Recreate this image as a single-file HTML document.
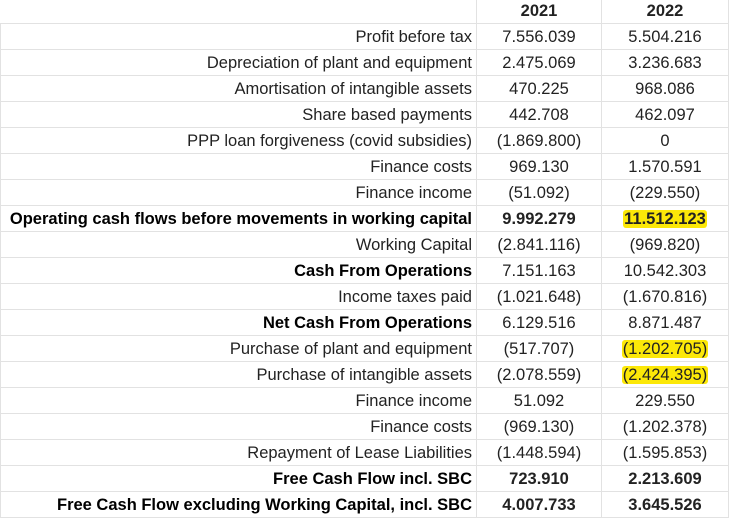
<!DOCTYPE html>
<html><head><meta charset="utf-8"><style>
body{margin:0;background:#fff;font-family:"Liberation Sans",Arial,sans-serif;font-size:16.5px;color:#222;overflow:hidden;width:729px;height:516px;position:relative;}
.r{display:flex;height:26px;line-height:27px;border-bottom:1px solid #e2e2e2;box-sizing:border-box;white-space:nowrap;}
.r.h{height:24px;line-height:22px;font-weight:bold;}
.l{width:477px;text-align:right;padding-right:4px;box-sizing:border-box;border-right:1px solid #e2e2e2;border-left:1px solid #e2e2e2;}
.a{width:125px;text-align:center;box-sizing:border-box;border-right:1px solid #e2e2e2;}
.b{width:127px;text-align:center;box-sizing:border-box;border-right:1px solid #e2e2e2;}
.bo{font-weight:bold;color:#000;}
.bo .a,.bo .b{color:#222;}
.n .a,.n .b{font-weight:normal;}
.hl{background:#fce808;padding:0 1px;border-radius:3px;}
</style></head><body>
<div class="r h"><div class="l" style="border-left:none"></div><div class="a">2021</div><div class="b">2022</div></div>
<div class="r"><div class="l">Profit before tax</div><div class="a">7.556.039</div><div class="b">5.504.216</div></div>
<div class="r"><div class="l">Depreciation of plant and equipment</div><div class="a">2.475.069</div><div class="b">3.236.683</div></div>
<div class="r"><div class="l">Amortisation of intangible assets</div><div class="a">470.225</div><div class="b">968.086</div></div>
<div class="r"><div class="l">Share based payments</div><div class="a">442.708</div><div class="b">462.097</div></div>
<div class="r"><div class="l">PPP loan forgiveness (covid subsidies)</div><div class="a">(1.869.800)</div><div class="b">0</div></div>
<div class="r"><div class="l">Finance costs</div><div class="a">969.130</div><div class="b">1.570.591</div></div>
<div class="r"><div class="l">Finance income</div><div class="a">(51.092)</div><div class="b">(229.550)</div></div>
<div class="r bo"><div class="l">Operating cash flows before movements in working capital</div><div class="a">9.992.279</div><div class="b"><span class="hl">11.512.123</span></div></div>
<div class="r"><div class="l">Working Capital</div><div class="a">(2.841.116)</div><div class="b">(969.820)</div></div>
<div class="r bo n"><div class="l">Cash From Operations</div><div class="a">7.151.163</div><div class="b">10.542.303</div></div>
<div class="r"><div class="l">Income taxes paid</div><div class="a">(1.021.648)</div><div class="b">(1.670.816)</div></div>
<div class="r bo n"><div class="l">Net Cash From Operations</div><div class="a">6.129.516</div><div class="b">8.871.487</div></div>
<div class="r"><div class="l">Purchase of plant and equipment</div><div class="a">(517.707)</div><div class="b"><span class="hl">(1.202.705)</span></div></div>
<div class="r"><div class="l">Purchase of intangible assets</div><div class="a">(2.078.559)</div><div class="b"><span class="hl">(2.424.395)</span></div></div>
<div class="r"><div class="l">Finance income</div><div class="a">51.092</div><div class="b">229.550</div></div>
<div class="r"><div class="l">Finance costs</div><div class="a">(969.130)</div><div class="b">(1.202.378)</div></div>
<div class="r"><div class="l">Repayment of Lease Liabilities</div><div class="a">(1.448.594)</div><div class="b">(1.595.853)</div></div>
<div class="r bo"><div class="l">Free Cash Flow incl. SBC</div><div class="a">723.910</div><div class="b">2.213.609</div></div>
<div class="r bo"><div class="l">Free Cash Flow excluding Working Capital, incl. SBC</div><div class="a">4.007.733</div><div class="b">3.645.526</div></div>
</body></html>
